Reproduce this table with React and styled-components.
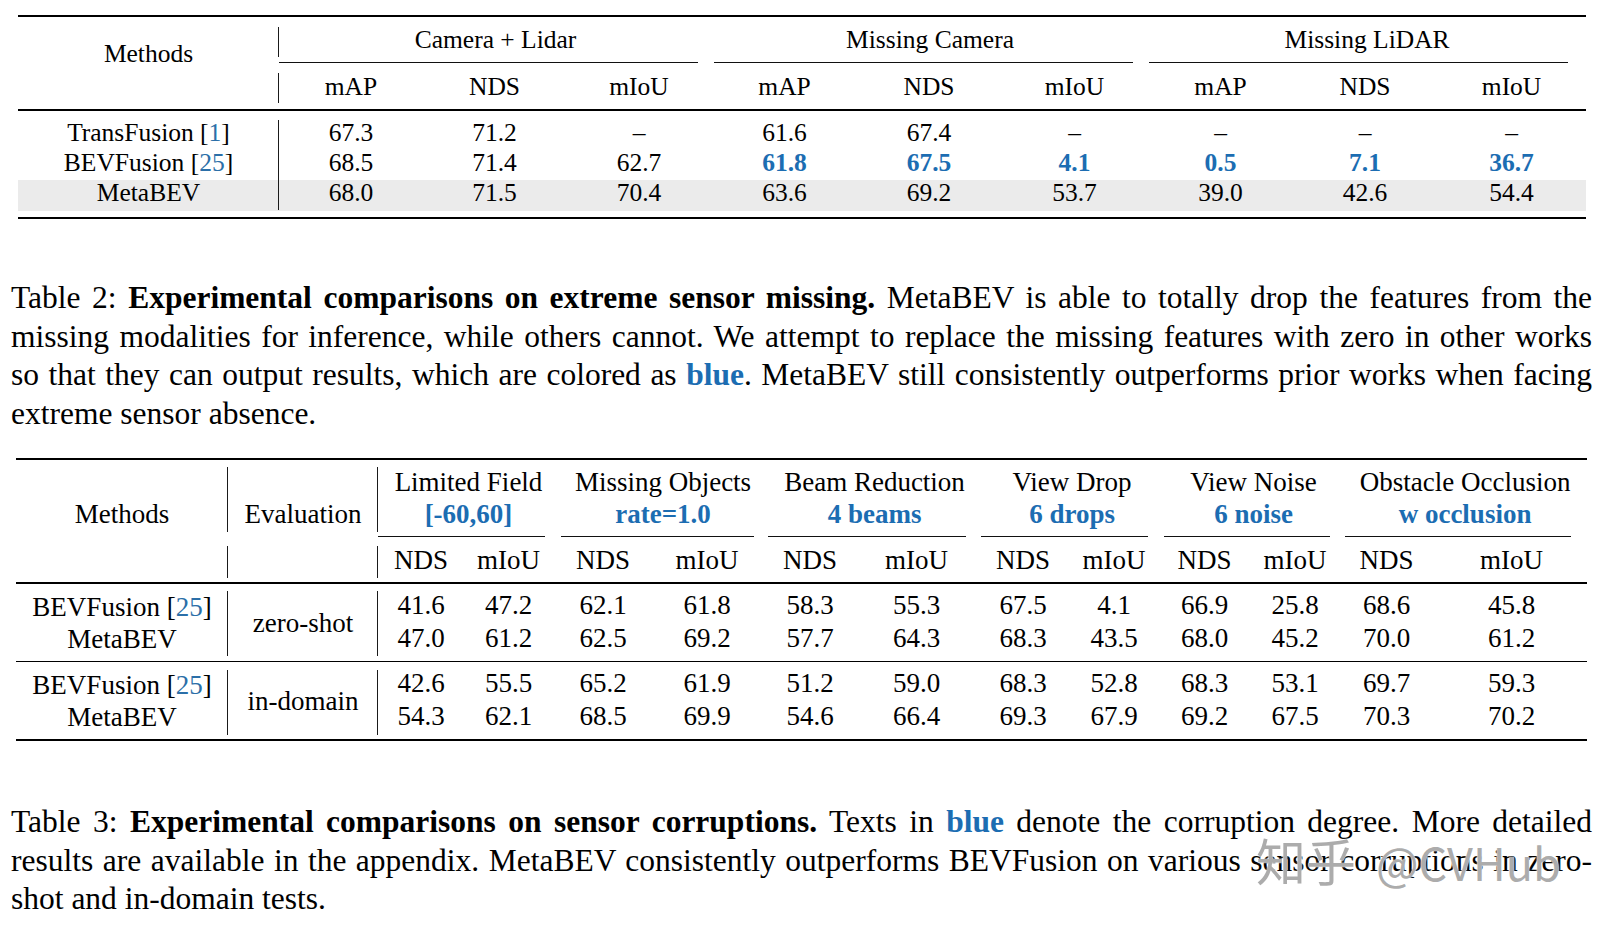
import React from "react";
import styled, { createGlobalStyle, css } from "styled-components";

const BLUE = "#1c6db2";
const CITE = "#2b6fa8";

const GlobalStyle = createGlobalStyle`
  body {
    margin: 0;
    background: #fff;
  }
`;

const Page = styled.div`
  position: relative;
  width: 1602px;
  height: 926px;
  overflow: hidden;
  box-sizing: border-box;
  padding-top: 15px;
  font-family: "Liberation Serif", "Times New Roman", serif;
  color: #000;
  background: #fff;
`;

const Table = styled.table`
  margin-left: ${(p) => p.$x}px;
  margin-top: ${(p) => p.$top || 0}px;
  width: ${(p) => p.$w}px;
  font-size: ${(p) => p.$size}px;
  border-collapse: separate;
  border-spacing: 0;
  table-layout: fixed;
  border-top: 2px solid #000;
  border-bottom: 2px solid #000;
`;

const Col = styled.col`
  width: ${(p) => p.$w}px;
`;

// table cell, $div = [top, bottom] offsets of the vertical rule on its right
const Cell = styled.td`
  position: relative;
  padding: 0 0 ${(p) => p.$pb || 0}px 0;
  text-align: center;
  white-space: nowrap;
  vertical-align: ${(p) => p.$va || "top"};
  border-bottom: ${(p) => (p.$rule ? `${p.$rule}px solid #000` : "none")};
  ${(p) =>
    p.$div &&
    css`
      &::after {
        content: "";
        position: absolute;
        right: 0;
        top: ${p.$div[0]}px;
        bottom: ${p.$div[1]}px;
        width: 1px;
        background: #1a1a1a;
      }
    `}
`;

// inner box: fixed height, line-height = 2 x distance to the text centre
const Box = styled.div`
  height: ${(p) => p.$h}px;
  line-height: ${(p) => p.$lh}px;
  background: ${(p) => p.$bg || "transparent"};
`;

const Stack = styled.div`
  line-height: ${(p) => p.$lh}px;
`;

const GroupLabel = styled.div`
  box-sizing: border-box;
  height: ${(p) => p.$h}px;
  padding: ${(p) => p.$pt || 0}px 0 0 ${(p) => (p.$dx || 0) * 2}px;
  line-height: ${(p) => p.$lh}px;
`;

const CRule = styled.div`
  height: 1px;
  margin: 0 ${(p) => p.$trim[1]}px 0 ${(p) => p.$trim[0]}px;
  background: #111;
`;

const Strong = styled.b`
  font-weight: 700;
  color: ${(p) => (p.$blue ? BLUE : "inherit")};
`;

const Cite = styled.span`
  color: ${CITE};
`;

const Caption = styled.div`
  margin: ${(p) => p.$top}px 0 0 11px;
  width: 1581px;
  font-size: 31.5px;
  line-height: 38.5px;
`;

const Line = styled.div`
  text-align: justify;
  text-align-last: ${(p) => (p.$last ? "left" : "justify")};
`;

const Watermark = styled.div`
  position: absolute;
  left: 1256px;
  top: 834px;
  display: flex;
  align-items: baseline;
  gap: 20px;
  font-family: "Noto Sans CJK SC", "Noto Sans", sans-serif;
  line-height: 1;
  color: rgba(140, 140, 140, 0.72);
  text-shadow: 0 0 2px #fff, 0 0 1px #fff;
  white-space: nowrap;
  pointer-events: none;
`;

const MarkPart = styled.span`
  font-size: ${(p) => p.$size}px;
`;

const Method = ({ name, cite }) => (
  <>
    {name}
    {cite && (
      <>
        {" "}[<Cite>{cite}</Cite>]
      </>
    )}
  </>
);

/* ---------------- Table 2 ---------------- */

const t1Cols = [261, 144, 143, 146, 145, 144, 147, 145, 144, 149];
const t1Groups = [
  { name: "Camera + Lidar", trim: [0, 14] },
  { name: "Missing Camera", trim: [2, 15] },
  { name: "Missing LiDAR", trim: [1, 18] },
];
const t1Metrics = ["mAP", "NDS", "mIoU"];
const t1Rows = [
  {
    name: "TransFusion",
    cite: "1",
    vals: ["67.3", "71.2", "–", "61.6", "67.4", "–", "–", "–", "–"],
    h: 38,
    lh: 43,
    div: [9, 0],
  },
  {
    name: "BEVFusion",
    cite: "25",
    vals: ["68.5", "71.4", "62.7", "61.8", "67.5", "4.1", "0.5", "7.1", "36.7"],
    blueFrom: 3,
    h: 31,
    lh: 27,
    div: [0, 0],
  },
  {
    name: "MetaBEV",
    vals: ["68.0", "71.5", "70.4", "63.6", "69.2", "53.7", "39.0", "42.6", "54.4"],
    h: 31,
    lh: 26,
    div: [0, 7],
    shade: true,
  },
];

const SensorMissingTable = () => (
  <Table $x={18} $w={1568} $size={25.5}>
    <colgroup>
      {t1Cols.map((w, i) => (
        <Col key={i} $w={w} />
      ))}
    </colgroup>
    <tbody>
      <tr>
        <Cell $div={[10, 6]}>
          <Box $h={46} $lh={74}>
            Methods
          </Box>
        </Cell>
        {t1Groups.map((g) => (
          <Cell key={g.name} colSpan={3}>
            <GroupLabel $h={45} $lh={46}>
              {g.name}
            </GroupLabel>
            <CRule $trim={g.trim} />
          </Cell>
        ))}
      </tr>
      <tr>
        <Cell $div={[10, 6]} $rule={2}>
          <Box $h={46} $lh={48} />
        </Cell>
        {t1Groups.map((g) =>
          t1Metrics.map((m) => (
            <Cell key={g.name + m} $rule={2}>
              <Box $h={46} $lh={48}>
                {m}
              </Box>
            </Cell>
          ))
        )}
      </tr>
      {t1Rows.map((r) => (
        <tr key={r.name}>
          <Cell $div={r.div} $pb={r.shade ? 6 : 0}>
            <Box $h={r.h} $lh={r.lh} $bg={r.shade ? "#ebebeb" : null}>
              <Method name={r.name} cite={r.cite} />
            </Box>
          </Cell>
          {r.vals.map((v, i) => (
            <Cell key={i} $pb={r.shade ? 6 : 0}>
              <Box $h={r.h} $lh={r.lh} $bg={r.shade ? "#ebebeb" : null}>
                {r.blueFrom !== undefined && i >= r.blueFrom ? (
                  <Strong $blue>{v}</Strong>
                ) : (
                  v
                )}
              </Box>
            </Cell>
          ))}
        </tr>
      ))}
    </tbody>
  </Table>
);

/* ---------------- Table 3 ---------------- */

const t3Cols = [212, 150, 86, 89, 100, 108, 98, 115, 98, 84, 97, 84, 99, 151];
const t3Groups = [
  { name: "Limited Field", sub: "[-60,60]", trim: [0, 8], dx: 3 },
  { name: "Missing Objects", sub: "rate=1.0", trim: [8, 7], dx: 6 },
  { name: "Beam Reduction", sub: "4 beams", trim: [7, 8], dx: 7 },
  { name: "View Drop", sub: "6 drops", trim: [7, 8], dx: 7 },
  { name: "View Noise", sub: "6 noise", trim: [8, 7], dx: 7 },
  { name: "Obstacle Occlusion", sub: "w occlusion", trim: [8, 16], dx: 3 },
];
const t3Blocks = [
  {
    evaluation: "zero-shot",
    div: [7, 5],
    rule: 1,
    rows: [
      {
        name: "BEVFusion",
        cite: "25",
        vals: ["41.6", "47.2", "62.1", "61.8", "58.3", "55.3", "67.5", "4.1", "66.9", "25.8", "68.6", "45.8"],
      },
      {
        name: "MetaBEV",
        vals: ["47.0", "61.2", "62.5", "69.2", "57.7", "64.3", "68.3", "43.5", "68.0", "45.2", "70.0", "61.2"],
      },
    ],
  },
  {
    evaluation: "in-domain",
    div: [8, 4],
    rule: 0,
    rows: [
      {
        name: "BEVFusion",
        cite: "25",
        vals: ["42.6", "55.5", "65.2", "61.9", "51.2", "59.0", "68.3", "52.8", "68.3", "53.1", "69.7", "59.3"],
      },
      {
        name: "MetaBEV",
        vals: ["54.3", "62.1", "68.5", "69.9", "54.6", "66.4", "69.3", "67.9", "69.2", "67.5", "70.3", "70.2"],
      },
    ],
  },
];

const CorruptionTable = () => (
  <Table $x={16} $top={25} $w={1571} $size={27}>
    <colgroup>
      {t3Cols.map((w, i) => (
        <Col key={i} $w={w} />
      ))}
    </colgroup>
    <tbody>
      <tr>
        <Cell $div={[7, 5]}>
          <Box $h={77} $lh={108}>
            Methods
          </Box>
        </Cell>
        <Cell $div={[7, 5]}>
          <Box $h={77} $lh={108}>
            Evaluation
          </Box>
        </Cell>
        {t3Groups.map((g) => (
          <Cell key={g.name} colSpan={2}>
            <GroupLabel $h={76} $pt={6} $lh={32} $dx={g.dx}>
              {g.name}
              <br />
              <Strong $blue>{g.sub}</Strong>
            </GroupLabel>
            <CRule $trim={g.trim} />
          </Cell>
        ))}
      </tr>
      <tr>
        <Cell $div={[9, 4]} $rule={2}>
          <Box $h={45} $lh={46} />
        </Cell>
        <Cell $div={[9, 4]} $rule={2}>
          <Box $h={45} $lh={46} />
        </Cell>
        {t3Groups.map((g) =>
          ["NDS", "mIoU"].map((m) => (
            <Cell key={g.name + m} $rule={2}>
              <Box $h={45} $lh={46}>
                {m}
              </Box>
            </Cell>
          ))
        )}
      </tr>
      {t3Blocks.map((b) =>
        b.rows.map((r, ri) => (
          <tr key={b.evaluation + r.name}>
            {ri === 0 && (
              <>
                <Cell rowSpan={2} $va="middle" $div={b.div} $rule={b.rule}>
                  <Stack $lh={32}>
                    {b.rows.map((m) => (
                      <div key={m.name}>
                        <Method name={m.name} cite={m.cite} />
                      </div>
                    ))}
                  </Stack>
                </Cell>
                <Cell rowSpan={2} $va="middle" $div={b.div} $rule={b.rule}>
                  <Stack $lh={32}>{b.evaluation}</Stack>
                </Cell>
              </>
            )}
            {r.vals.map((v, i) => (
              <Cell key={i} $rule={ri === 1 ? b.rule : 0}>
                <Box $h={ri === 0 ? 38 : 39} $lh={ri === 0 ? 43 : 32}>
                  {v}
                </Box>
              </Cell>
            ))}
          </tr>
        ))
      )}
    </tbody>
  </Table>
);

export default function App() {
  return (
    <Page>
      <GlobalStyle />
      <SensorMissingTable />
      <Caption $top={60}>
        <Line>
          Table 2: <Strong>Experimental comparisons on extreme sensor missing.</Strong> MetaBEV is able to
          totally drop the features from the
        </Line>
        <Line>
          missing modalities for inference, while others cannot. We attempt to replace the missing features
          with zero in other works
        </Line>
        <Line>
          so that they can output results, which are colored as <Strong $blue>blue</Strong>. MetaBEV still
          consistently outperforms prior works when facing
        </Line>
        <Line $last>extreme sensor absence.</Line>
      </Caption>
      <CorruptionTable />
      <Caption $top={62}>
        <Line>
          Table 3: <Strong>Experimental comparisons on sensor corruptions.</Strong> Texts in{" "}
          <Strong $blue>blue</Strong> denote the corruption degree. More detailed
        </Line>
        <Line>
          results are available in the appendix. MetaBEV consistently outperforms BEVFusion on various sensor
          corruptions in zero-
        </Line>
        <Line $last>shot and in-domain tests.</Line>
      </Caption>
      <Watermark>
        <MarkPart $size={50}>知乎</MarkPart>
        <MarkPart $size={45}>@CVHub</MarkPart>
      </Watermark>
    </Page>
  );
}
